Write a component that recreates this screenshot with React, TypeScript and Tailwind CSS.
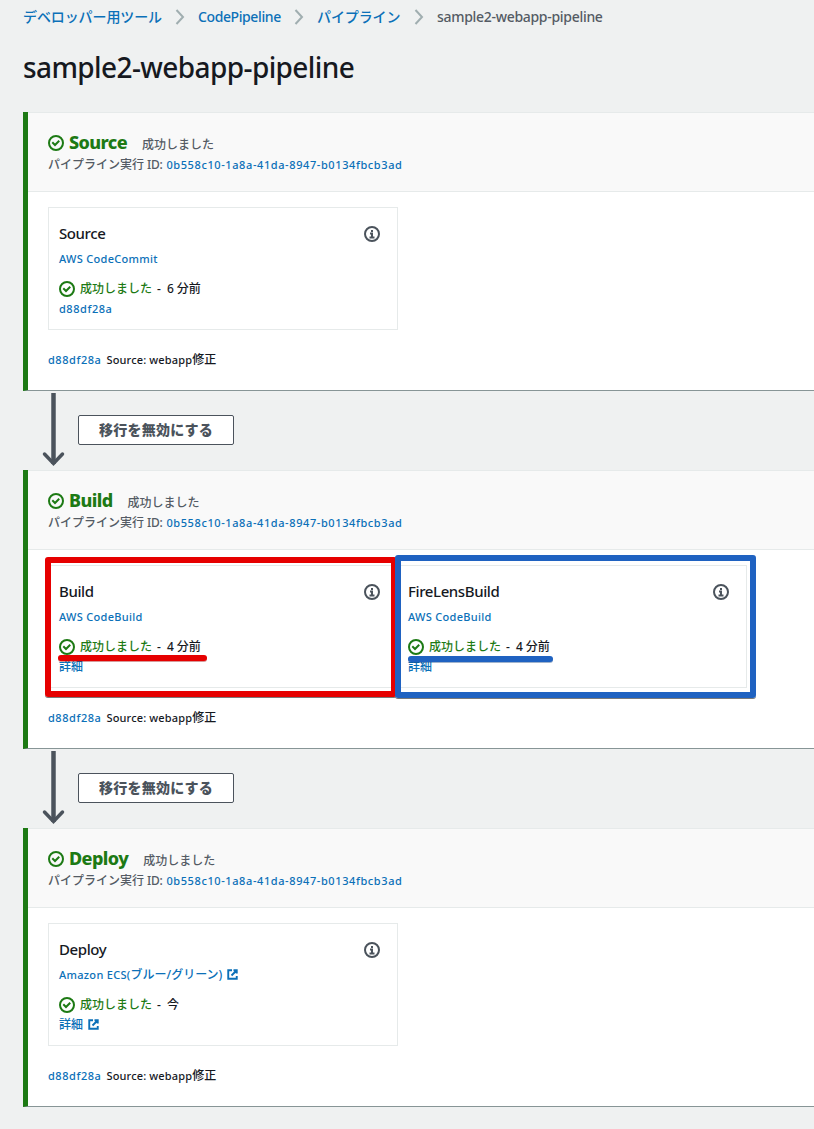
import React from "react";

type IconProps = { className?: string };

const CheckIcon = ({ className = "" }: IconProps) => (
  <svg viewBox="0 0 16 16" className={`h-4 w-4 shrink-0 fill-none stroke-[#1d7a14] stroke-2 ${className}`}>
    <circle cx="8" cy="8" r="7" />
    <path d="M5 8l2 2 3.521-3.521" strokeLinecap="square" />
  </svg>
);

const InfoIcon = ({ className = "" }: IconProps) => (
  <svg viewBox="0 0 16 16" className={`h-4 w-4 shrink-0 fill-none stroke-[#4b535c] stroke-2 ${className}`}>
    <circle cx="8" cy="8" r="7" />
    <path d="M8 11V7M6 7.500h3M5.500 11.500h5M8 4v2" />
  </svg>
);

const ExternalIcon = ({ className = "" }: IconProps) => (
  <svg viewBox="0 0 11 11" className={`mb-[2px] h-[11px] w-[11px] shrink-0 fill-none stroke-[#0b70b8] ${className}`}>
    <path d="M5 1.250H1.250v8.500h8.500V7M6.500 1.250h3.250v3.250M4.500 6.500l5-5" strokeWidth="1.900" />
  </svg>
);

const Chevron = () => (
  <svg viewBox="0 0 10 16" className="h-4 w-[10px] shrink-0 fill-none stroke-[#a0aeb0] stroke-2">
    <path d="M1.500 1l6.500 7-6.500 7" />
  </svg>
);

const CommitId = () => <span className="text-[11px] tracking-[0.55px] text-[#0b70b8]">d88df28a</span>;

type Action = {
  name: string;
  provider: React.ReactNode;
  time: React.ReactNode;
  link: React.ReactNode;
  mark?: React.ReactNode;
};

const ActionCard = ({ name, provider, time, link, mark }: Action) => (
  <div className="relative -mr-px h-[123px] w-[350px] border border-[#e6eaea] bg-white px-[10px] pt-4">
    <div className="flex h-5 items-center justify-between pr-[7px] text-[15px] font-medium text-[#16191f]">
      <span className="pb-[2px] tracking-[-0.4px]">{name}</span>
      <InfoIcon />
    </div>
    <div className="mt-[5px] flex h-5 items-center text-[11px] tracking-[0.3px] text-[#0b70b8]">{provider}</div>
    <div className="mt-[10px] flex h-5 items-center">
      <CheckIcon />
      <span className="ml-[5px] text-[#1d7a14]">成功しました</span>
      <span className="ml-[5px]">-</span>
      <span className="ml-[6px]">{time}</span>
    </div>
    <div className="flex h-5 items-center text-[#0b70b8]">{link}</div>
    {mark}
  </div>
);

const Stage = ({ name, children }: { name: string; children: React.ReactNode }) => (
  <section className="ml-[23px] h-[279px] border-b border-l-[5px] border-b-[#879596] border-l-[#1d7a14] bg-white">
    <header className="h-20 border-y border-[#e6eaea] bg-[#f9f9f9] pt-5 pl-5">
      <div className="flex h-5 items-center">
        <CheckIcon />
        <h2 className="ml-[5px] pb-[2px] text-[18px] font-extrabold tracking-[-0.6px] text-[#1d7a14]">{name}</h2>
        <span className="ml-[15px] pt-[3px] text-[#545b64]">成功しました</span>
      </div>
      <div className="mt-[2px] flex h-5 items-center">
        <span className="text-[#545b64]">
          パイプライン実行<span className="ml-[3px] tracking-[-0.3px]">ID:</span>
        </span>
        <span className="ml-[4px] text-[11px] tracking-[0.6px] text-[#0b70b8]">0b558c10-1a8a-41da-8947-b0134fbcb3ad</span>
      </div>
    </header>
    <div className="flex pt-[15px] pl-5">{children}</div>
    <div className="mt-5 flex h-5 items-center pl-5">
      <CommitId />
      <span className="ml-[5px] text-[11px] tracking-[0.15px]">Source: webapp</span>
      <span>修正</span>
    </div>
  </section>
);

const Transition = () => (
  <div className="flex h-[79px] pl-[42px]">
    <svg viewBox="0 0 24 79" className="h-[79px] w-6 shrink-0 fill-none stroke-[#4b535c]">
      <path d="M11.500 2v71" strokeWidth="4.500" />
      <path d="M2.500 63l9 9.500 9-9.500" strokeWidth="3.500" strokeLinecap="round" />
    </svg>
    <button className="mt-6 ml-3 h-[30px] w-[156px] rounded-[2px] border border-[#4b535c] bg-white pb-[2px] text-[14px] font-extrabold tracking-[0.25px] text-[#4b535c]">
      移行を無効にする
    </button>
  </div>
);

export default function App() {
  return (
    <main className="h-[1129px] w-[814px] overflow-hidden bg-[#eff1f1] font-['Noto_Sans','Noto_Sans_CJK_JP',sans-serif] text-[12px] font-medium whitespace-nowrap text-[#16191f]">
      <nav className="flex h-[34px] items-center pl-[23px] text-[14px] text-[#0b70b8]">
        <span className="w-[138px] pb-[2px] tracking-[-0.1px]">デベロッパー用ツール</span>
        <span className="ml-[14px] flex"><Chevron /></span>
        <span className="ml-[13px] w-[83px] pb-[2px] tracking-[-0.4px]">CodePipeline</span>
        <span className="ml-[13px] flex"><Chevron /></span>
        <span className="ml-[13px] w-[83px] pb-[2px] tracking-[-0.1px]">パイプライン</span>
        <span className="ml-[14px] flex"><Chevron /></span>
        <span className="ml-[13px] pb-[2px] tracking-[-0.3px] text-[#545b64]">sample2-webapp-pipeline</span>
      </nav>
      <h1 className="flex h-[78px] pt-[14px] pl-[23px] text-[28px] leading-[38px] tracking-[-0.6px]">sample2-webapp-pipeline</h1>
      <Stage name="Source">
        <ActionCard name="Source" provider="AWS CodeCommit" time="6 分前" link={<CommitId />} />
      </Stage>
      <Transition />
      <Stage name="Build">
        <ActionCard
          name="Build"
          provider="AWS CodeBuild"
          time="4 分前"
          link="詳細"
          mark={
            <>
              <div className="absolute -top-[9px] -left-[4px] h-[140px] w-[352px] rounded-[3px] border-6 border-[#e60000] shadow-[0_1px_0_#7a7a7a]" />
              <div className="absolute top-[89px] left-[9px] h-[6px] w-[149px] rounded-full bg-[#e60000] shadow-[0_1px_0_#99000066]" />
            </>
          }
        />
        <ActionCard
          name="FireLensBuild"
          provider="AWS CodeBuild"
          time="4 分前"
          link="詳細"
          mark={
            <>
              <div className="absolute -top-[11px] -left-[3px] h-[143px] w-[361px] rounded-[3px] border-6 border-[#1f62c1] shadow-[0_1px_0_#7a7a7a]" />
              <div className="absolute top-[90px] left-[10px] h-[6px] w-[145px] rounded-full bg-[#1f62c1] shadow-[0_1px_0_#12407f66]" />
            </>
          }
        />
      </Stage>
      <Transition />
      <Stage name="Deploy">
        <ActionCard
          name="Deploy"
          provider={
            <>
              <span>Amazon ECS(</span>
              <span className="text-[12px] tracking-normal">ブルー/グリーン)</span>
              <ExternalIcon className="ml-[5px]" />
            </>
          }
          time="今"
          link={
            <>
              詳細
              <ExternalIcon className="ml-[5px]" />
            </>
          }
        />
      </Stage>
    </main>
  );
}
